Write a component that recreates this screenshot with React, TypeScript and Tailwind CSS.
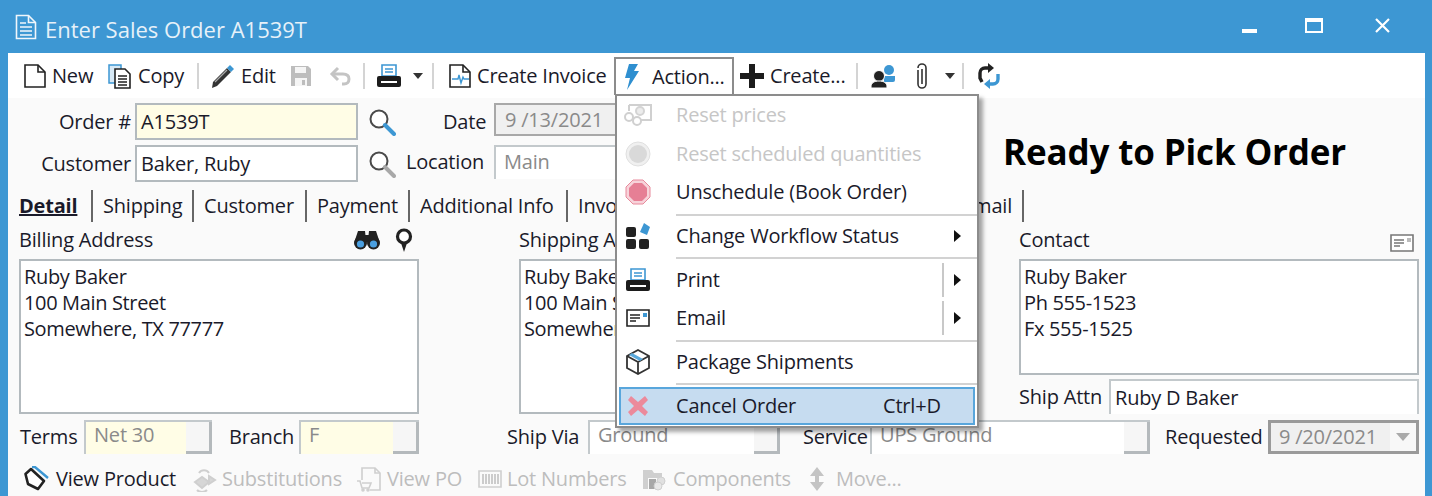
import React from 'react';

const Doc = () => (
  <svg width="24" height="26" viewBox="0 0 24 26" fill="none" stroke="#222" strokeWidth="1.6">
    <path d="M2 2h13l7 7v15H2z" fill="#fff" /><path d="M15 2v7h7" />
  </svg>
);
const CopyIco = () => (
  <svg width="26" height="26" viewBox="0 0 26 26" fill="none">
    <path d="M2 2h12v18H2z" fill="#d7e9f6" stroke="#3d97d3" strokeWidth="1.5" />
    <path d="M8 6h10l5 5v14H8z" fill="#fff" stroke="#222" strokeWidth="1.6" />
    <path d="M11 13h9M11 16h9M11 19h9M11 22h9" stroke="#222" strokeWidth="1.3" />
  </svg>
);
const Pencil = () => (
  <svg width="26" height="26" viewBox="0 0 26 26">
    <path d="M3 19 17 5l4 4L7 23l-5 2z" fill="#333" />
    <path d="M17 5l3-3 4 4-3 3z" fill="#3d97d3" />
    <path d="M5 19 17 7" stroke="#aaa" strokeWidth="1.2" />
  </svg>
);
const Save = () => (
  <svg width="22" height="22" viewBox="0 0 22 22">
    <path d="M1 1h17l3 3v17H1z" fill="#bdbdbd" />
    <path d="M5 2h11v6H5zM5 13h12v8H5z" fill="#f5f5f5" />
    <path d="M12 15h3v5h-3z" fill="#bdbdbd" />
  </svg>
);
const Undo = () => (
  <svg width="22" height="20" viewBox="0 0 22 20" fill="none" stroke="#c4c4c4" strokeWidth="3">
    <path d="M9 2 3 8l6 6" /><path d="M3 8h11c4 0 6 2 6 5s-2 5-5 5h-2" />
  </svg>
);
const Printer = ({ w = 26 }: { w?: number }) => (
  <svg width={w} height={w} viewBox="0 0 26 26">
    <path d="M6 2h14v11H6z" fill="#fff" stroke="#3d97d3" strokeWidth="1.6" />
    <path d="M9 6h8M9 9h8" stroke="#3d97d3" strokeWidth="1.4" />
    <path d="M3 13h20q2 0 2 2v7q0 2-2 2H3q-2 0-2-2v-7q0-2 2-2z" fill="#1c1c1c" />
    <path d="M5 18h16v2H5z" fill="#fff" />
  </svg>
);
const Caret = () => (
  <svg width="10" height="6" viewBox="0 0 10 6"><path d="M0 0h10L5 6z" fill="#333" /></svg>
);
const Invoice = () => (
  <svg width="24" height="26" viewBox="0 0 24 26" fill="none">
    <path d="M2 2h13l7 7v15H2z" fill="#fff" stroke="#222" strokeWidth="1.6" />
    <path d="M15 2v7h7" stroke="#222" strokeWidth="1.6" />
    <path d="M4 16h6l1-4 2 8 2-6 1 2h5" stroke="#3d97d3" strokeWidth="1.4" />
  </svg>
);
const Bolt = () => (
  <svg width="14" height="26" viewBox="0 0 14 26">
    <path d="M4 0h9L9 7h5L2 26l3-12H0z" fill="#2f8fd0" />
  </svg>
);
const Plus = () => (
  <svg width="24" height="24" viewBox="0 0 24 24"><path d="M9 0h6v9h9v6h-9v9H9v-9H0V9h9z" fill="#1c1c1c" /></svg>
);
const People = () => (
  <svg width="26" height="26" viewBox="0 0 26 26">
    <circle cx="19" cy="7" r="5" fill="#3d97d3" />
    <path d="M14 13h11v4a2 2 0 0 1-2 2h-9z" fill="#3d97d3" />
    <circle cx="9" cy="13" r="5.5" fill="#222" stroke="#fff" />
    <path d="M1 24c0-4 3-6 8-6s8 2 8 6v1H1z" fill="#222" stroke="#fff" />
  </svg>
);
const Clip = () => (
  <svg width="16" height="28" viewBox="0 0 16 28" fill="none" stroke="#333" strokeWidth="1.6">
    <path d="M4 8v14a4 4 0 0 0 8 0V6a4 4 0 0 0-8 0M8 7v15" />
  </svg>
);
const Refresh = () => (
  <svg width="24" height="26" viewBox="0 0 24 26" fill="none" strokeWidth="3.4">
    <path d="M12 5H8a5 5 0 0 0-5 5v5l2 4" stroke="#222" /><path d="M11 0v10l6-5z" fill="#222" />
    <path d="M12 21h4a5 5 0 0 0 5-5v-5" stroke="#3d97d3" /><path d="M13 16v10l-6-5z" fill="#3d97d3" />
  </svg>
);
const Search = ({ c }: { c: string }) => (
  <svg width="28" height="28" viewBox="0 0 28 28" fill="none">
    <circle cx="11" cy="11" r="8.5" stroke="#4a4a4a" strokeWidth="2" fill="#fff" />
    <path d="M17 17l9 9" stroke={c} strokeWidth="4" strokeLinecap="round" />
  </svg>
);
const Binoculars = () => (
  <svg width="26" height="20" viewBox="0 0 26 20">
    <circle cx="6.500" cy="13" r="6.500" fill="#222" /><circle cx="19.500" cy="13" r="6.500" fill="#222" />
    <path d="M4 1h7l1 9H1zM15 1h7l3 9H14zM10 5h6v7h-6z" fill="#222" />
    <circle cx="6.500" cy="14" r="3.600" fill="#4a9fe0" /><circle cx="19.500" cy="14" r="3.600" fill="#4a9fe0" />
  </svg>
);
const Pin = () => (
  <svg width="18" height="24" viewBox="0 0 18 24" fill="none">
    <circle cx="9" cy="8.500" r="6.500" stroke="#222" strokeWidth="3.200" fill="#fff" />
    <path d="M6 15h6l-3 9z" fill="#222" />
  </svg>
);
const CardIco = ({ dim = false }: { dim?: boolean }) => (
  <svg width="24" height="18" viewBox="0 0 24 18" fill="none">
    <path d="M1 1h22v16H1z" stroke={dim ? '#777' : '#222'} strokeWidth="1.600" fill="#fff" />
    <path d="M4 6h10M4 9h10M4 12h6" stroke={dim ? '#777' : '#222'} strokeWidth="1.300" />
    <path d="M17 4h4v4h-4z" fill={dim ? '#bbb' : '#3d97d3'} />
  </svg>
);
const Gears = () => (
  <svg width="30" height="24" viewBox="0 0 30 24" fill="none">
    <path d="M6 2h22v15H16" stroke="#d0d0d0" strokeWidth="2" />
    <path d="M6 2v6" stroke="#d0d0d0" strokeWidth="2" />
    <circle cx="17" cy="8" r="4" fill="#ececec" stroke="#d4d4d4" strokeWidth="2" />
    <circle cx="6" cy="14" r="4" fill="#fff" stroke="#d0d0d0" strokeWidth="2" />
    <circle cx="14" cy="18" r="4" fill="#fff" stroke="#d0d0d0" strokeWidth="2" />
  </svg>
);
const GrayDot = () => (
  <svg width="26" height="26" viewBox="0 0 26 26">
    <circle cx="13" cy="13" r="12" fill="#f0f0f0" stroke="#e0e0e0" />
    <circle cx="13" cy="13" r="9" fill="#d9d9d9" />
  </svg>
);
const Stop = () => (
  <svg width="26" height="26" viewBox="0 0 26 26">
    <path d="M8 1h10l7 7v10l-7 7H8l-7-7V8z" fill="#f7d3da" stroke="#e88a9c" />
    <path d="M9 4h8l5 5v8l-5 5H9l-5-5V9z" fill="#e67f95" />
  </svg>
);
const Squares = () => (
  <svg width="26" height="26" viewBox="0 0 26 26">
    <rect x="1" y="4" width="10" height="10" rx="2" fill="#222" />
    <rect x="1" y="16" width="10" height="10" rx="2" fill="#222" />
    <rect x="14" y="16" width="10" height="10" rx="2" fill="#222" />
    <path d="M19 0l6 4-3 8-7-3z" fill="#3d97d3" />
  </svg>
);
const Box = () => (
  <svg width="24" height="26" viewBox="0 0 24 26" fill="none">
    <path d="M12 1 23 7v12l-11 6-11-6V7z" fill="#fff" stroke="#333" strokeWidth="1.800" />
    <path d="M1 7l11 6 11-6M12 13v12" stroke="#333" strokeWidth="1.800" />
    <path d="M6 4l11 6-3 2L3 6z" fill="#5aa9dc" />
  </svg>
);
const XIco = () => (
  <svg width="22" height="22" viewBox="0 0 22 22">
    <path d="M4 1l7 6 7-6 3 4-6 6 6 6-3 4-7-6-7 6-3-4 6-6-6-6z" fill="#ec8a9b" />
  </svg>
);
const Tag = () => (
  <svg width="26" height="26" viewBox="0 0 26 26" fill="none">
    <path d="M8 1l3 0 13 11" stroke="#3d97d3" strokeWidth="2.400" />
    <path d="M1.500 8 7 3l13 12-6 8-10-5z" fill="#fff" stroke="#222" strokeWidth="2.600" strokeLinejoin="round" />
  </svg>
);
const SubsIco = () => (
  <svg width="26" height="26" viewBox="0 0 26 26" fill="none" stroke="#cfcfcf" strokeWidth="2">
    <path d="M8 7a6 6 0 0 1 10 0" /><path d="M4 16l7-5 7 5-7 6z" fill="#d6d6d6" />
    <path d="M18 10l6 4-6 4z" fill="#d6d6d6" /><path d="M6 24a7 7 0 0 0 10 0" />
  </svg>
);
const PoIco = () => (
  <svg width="26" height="26" viewBox="0 0 26 26" fill="none" stroke="#cfcfcf" strokeWidth="1.600">
    <path d="M6 14V2h13l5 5v17H14" /><path d="M19 2v5h5" />
    <path d="M1 15h3l2 7h7l2-5H6" /><circle cx="7" cy="24" r="1" /><circle cx="12" cy="24" r="1" />
  </svg>
);
const Barcode = () => (
  <svg width="24" height="18" viewBox="0 0 24 18" fill="none">
    <path d="M1 1h22v16H1z" stroke="#cfcfcf" strokeWidth="1.600" />
    <path d="M5 4v10M8 4v10M11 4v10M14 4v10M17 4v10M20 4v10" stroke="#c4c4c4" strokeWidth="1.700" />
  </svg>
);
const Comps = () => (
  <svg width="26" height="24" viewBox="0 0 26 24">
    <path d="M1 3h9l2 3h8v5H6v11H1z" fill="#cfcfcf" />
    <path d="M7 12h7v10H7z" fill="#a8a8a8" />
    <circle cx="19" cy="14" r="4" fill="#e0e0e0" stroke="#cfcfcf" />
    <circle cx="16" cy="19" r="4" fill="#e8e8e8" stroke="#cfcfcf" />
  </svg>
);
const MoveIco = () => (
  <svg width="18" height="24" viewBox="0 0 18 24"><path d="M9 0l7 9h-5v6h5l-7 9-7-9h5V9H2z" fill="#c4c4c4" /></svg>
);

const Sep = ({ className }: { className: string }) => <div className={`h-[26px] w-[2px] bg-[#d4d4d4] ${className}`} />;

const MenuSep = () => <div className="ml-[59px] h-[2px] bg-[#d2d2d2]" />;

const MenuItem = ({ icon, text, dim, h, arrow, split }: { icon: React.ReactNode; text: string; dim?: boolean; h: string; arrow?: boolean; split?: boolean }) => (
  <div className={`flex items-center ${h}`}>
    <div className="flex w-[59px] shrink-0 justify-center pr-[17px]">{icon}</div>
    <span className={`grow ${dim ? 'text-[#c6c6c6]' : ''}`}>{text}</span>
    {split && <div className="h-[34px] w-[2px] bg-[#c8c8c8]" />}
    {(arrow || split) && (
      <svg className={split ? 'ml-[10px] mr-[16px]' : 'mr-[16px]'} width="7" height="12" viewBox="0 0 7 12"><path d="M0 0l7 6-7 6z" fill="#111" /></svg>
    )}
  </div>
);

const ActionMenu = () => (
  <div className="absolute left-[-1px] top-[35px] z-20 flex h-[334px] w-[364px] flex-col border-2 border-[#8c8c8c] bg-white pt-[1px] shadow-[4px_4px_4px_rgba(0,0,0,0.35)]">
    <MenuItem icon={<Gears />} text="Reset prices" dim h="h-[37px]" />
    <MenuItem icon={<GrayDot />} text="Reset scheduled quantities" dim h="h-[40px]" />
    <MenuItem icon={<Stop />} text="Unschedule (Book Order)" h="h-[36px]" />
    <div className="mt-[4px]"><MenuSep /></div>
    <MenuItem icon={<Squares />} text="Change Workflow Status" arrow h="h-[41px]" />
    <MenuSep />
    <MenuItem icon={<Printer />} text="Print" split h="h-[42px]" />
    <MenuItem icon={<CardIco />} text="Email" split h="h-[39px] pb-[5px]" />
    <MenuSep />
    <MenuItem icon={<Box />} text="Package Shipments" h="h-[41px]" />
    <MenuSep />
    <div className="mx-[2px] mt-[2px] flex h-[38px] items-center border-2 border-[#58a6dc] bg-[#c6dcf0]">
      <div className="flex w-[55px] shrink-0 justify-center pr-[21px]"><XIco /></div>
      <span className="w-[207px]">Cancel Order</span>
      <span>Ctrl+D</span>
    </div>
  </div>
);

const Combo = ({ w, text, yellow }: { w: string; text: string; yellow?: boolean }) => (
  <div className={`flex h-[34px] ${w} border-l-2 border-t-2 border-[#c3c9cc] ${yellow ? 'bg-[#fffde6]' : 'bg-white'}`}>
    <span className="grow pl-[8px] leading-[26px] text-[#8a8a8a]">{text}</span>
    <div className="w-[26px] border-b-[3px] border-r-[3px] border-[#b4b9bc] bg-[#f6f6f6]" />
  </div>
);

const Address = ({ lines }: { lines: string[] }) => (
  <div className="h-[155px] border-2 border-[#b3babe] bg-white px-[3px] pt-[3px] leading-[26px] tracking-[-0.35px]">
    {lines.map((l) => <div key={l}>{l}</div>)}
  </div>
);

const Tab = ({ w, children }: { w: string; children: React.ReactNode }) => (
  <div className={`flex h-[32px] ${w} items-center border-r-2 border-[#666] pl-[10px] whitespace-nowrap`}>{children}</div>
);

const Gray = ({ w, icon, text }: { w: string; icon: React.ReactNode; text: string }) => (
  <div className={`flex ${w} items-center gap-[5px] text-[#bdbdbd]`}>{icon}<span>{text}</span></div>
);

export default function App() {
  return (
    <div className="h-[496px] w-[1432px] overflow-hidden bg-[#3d97d3] text-[20px] tracking-[-0.2px] text-[#1a1a2a] [font-family:'Open_Sans',sans-serif]">
      {/* title bar */}
      <div className="flex h-[53px] items-center pl-[15px] text-[#e6f1f9]">
        <svg width="22" height="26" viewBox="0 0 22 26" fill="none" stroke="#f0f6fb" strokeWidth="1.600">
          <path d="M1.500 1.500h12l7 7v16h-19z" /><path d="M13.500 1.500v7h7M5 9h6M5 13h12M5 17h12M5 21h12" />
        </svg>
        <span className="ml-[8px] w-[1197px] shrink-0 pt-[5px] text-[22px] tracking-normal">Enter Sales Order A1539T</span>
        <div className="h-[4px] w-[15px] shrink-0 translate-y-[4px] bg-white" />
        <div className="ml-[48px] h-[15px] w-[18px] shrink-0 -translate-y-[1px] border-2 border-t-4 border-white" />
        <svg className="ml-[52px] shrink-0 -translate-y-[1px]" width="15" height="15" viewBox="0 0 15 15" stroke="#fff" strokeWidth="2.200"><path d="M1 1l13 13M14 1 1 14" /></svg>
      </div>

      <div className="ml-[8px] mr-[7px] h-[443px] bg-[#fafafa]">
        {/* toolbar */}
        <div className="flex h-[45px] items-center bg-white pl-[15px]">
          <div className="flex w-[84px] items-center gap-[5px]"><Doc /><span>New</span></div>
          <div className="flex w-[90px] items-center gap-[5px]"><CopyIco /><span>Copy</span></div>
          <Sep className="mr-[11px]" />
          <div className="flex w-[80px] items-center gap-[5px]"><Pencil /><span>Edit</span></div>
          <div className="w-[39px]"><Save /></div>
          <div className="w-[34px]"><Undo /></div>
          <Sep className="mr-[11px]" />
          <div className="w-[37px]"><Printer /></div>
          <div className="w-[19px]"><Caret /></div>
          <Sep className="mr-[14px]" />
          <div className="flex w-[166px] items-center gap-[5px] whitespace-nowrap"><Invoice /><span>Create Invoice</span></div>
          <div className="relative flex h-[38px] w-[120px] items-center border-x-2 border-t-2 border-[#8c8c8c] bg-white pl-[9px]">
            <Bolt /><span className="ml-[13px]">Action...</span>
            <ActionMenu />
          </div>
          <div className="ml-[6px] flex w-[116px] items-center gap-[6px]"><Plus /><span>Create...</span></div>
          <Sep className="mr-[12px]" />
          <div className="w-[44px]"><People /></div>
          <div className="w-[31px]"><Clip /></div>
          <div className="w-[17px]"><Caret /></div>
          <Sep className="mr-[13px]" />
          <Refresh />
        </div>

        {/* order header */}
        <div className="flex pt-[5px]">
          <div className="flex w-[995px] flex-col gap-[5px]">
            <div className="flex h-[37px] items-center">
              <span className="w-[123px] text-right">Order #</span>
              <div className="ml-[4px] flex h-[37px] w-[223px] items-center border-2 border-[#b3babe] bg-[#fffde6] pl-[4px]">A1539T</div>
              <div className="ml-[10px] w-[75px]"><Search c="#3d97d3" /></div>
              <span className="w-[51px]">Date</span>
              <div className="flex h-[33px] w-[140px] items-center self-start border-2 border-[#a8a8a8] bg-[#f0f0f0] pl-[9px] text-[#8a8a8a]">9 /13/2021</div>
            </div>
            <div className="flex h-[37px] items-center">
              <span className="w-[123px] text-right">Customer</span>
              <div className="ml-[4px] flex h-[37px] w-[223px] items-center border-2 border-[#b3babe] bg-white pl-[4px]">Baker, Ruby</div>
              <div className="ml-[10px] w-[38px]"><Search c="#a8a8a8" /></div>
              <span className="w-[88px] pb-[3px]">Location</span>
              <div className="flex h-[34px] w-[140px] items-center self-start border-l-2 border-t-2 border-[#c3c9cc] bg-white pb-[3px] pl-[8px] text-[#8a8a8a]">Main</div>
            </div>
          </div>
          <h1 className="pt-[27px] text-[35px] leading-[44px] font-bold tracking-[-0.15px] whitespace-nowrap text-black">Ready to Pick Order</h1>
        </div>

        {/* tabs */}
        <div className="mt-[8px] flex pl-[1px]">
          <Tab w="w-[84px]"><span className="font-bold underline">Detail</span></Tab>
          <Tab w="w-[101px]">Shipping</Tab>
          <Tab w="w-[113px]">Customer</Tab>
          <Tab w="w-[103px]">Payment</Tab>
          <Tab w="w-[158px]">Additional Info</Tab>
          <Tab w="w-[456px]"><span className="grow">Invoices</span><span className="pr-[10px]">Email</span></Tab>
        </div>

        {/* addresses */}
        <div className="mt-[5px] grid grid-cols-[400px_400px_400px] gap-x-[100px] pl-[11px]">
          <div>
            <div className="flex h-[32px] items-center pb-[6px]">
              <span className="grow">Billing Address</span>
              <Binoculars /><div className="ml-[15px] mr-[6px]"><Pin /></div>
            </div>
            <Address lines={['Ruby Baker', '100 Main Street', 'Somewhere, TX 77777']} />
          </div>
          <div>
            <div className="flex h-[32px] items-center pb-[6px]">Shipping Address</div>
            <Address lines={['Ruby Baker', '100 Main Street', 'Somewhere, TX 77777']} />
          </div>
          <div>
            <div className="flex h-[32px] items-center pb-[6px]">
              <span className="grow">Contact</span>
              <div className="mr-[5px] translate-y-[3px]"><CardIco dim /></div>
            </div>
            <div className="h-[116px] border-2 border-[#b3babe] bg-white px-[3px] pt-[3px] leading-[26px] tracking-[-0.35px]">
              <div>Ruby Baker</div><div>Ph 555-1523</div><div>Fx 555-1525</div>
            </div>
            <div className="mt-[4px] flex items-center">
              <span className="w-[90px]">Ship Attn</span>
              <div className="flex h-[35px] grow items-center border-x-2 border-t-2 border-[#c3c9cc] bg-white pl-[4px]">Ruby D Baker</div>
            </div>
          </div>
        </div>

        {/* terms row */}
        <div className="mt-[6px] flex items-center pl-[12px]">
          <span className="w-[64px]">Terms</span>
          <Combo w="w-[128px]" text="Net 30" yellow />
          <span className="ml-[17px] w-[70px]">Branch</span>
          <Combo w="w-[120px]" text="F" yellow />
          <span className="ml-[88px] w-[81px]">Ship Via</span>
          <Combo w="w-[192px]" text="Ground" />
          <span className="ml-[23px] w-[67px]">Service</span>
          <Combo w="w-[280px]" text="UPS Ground" />
          <span className="ml-[15px] w-[103px]">Requested</span>
          <div className="flex h-[34px] w-[151px] border-[3px] border-[#9a9a9a] bg-[#f0f0f0]">
            <span className="grow pl-[8px] leading-[28px] text-[#8a8a8a]">9 /20/2021</span>
            <div className="flex w-[26px] items-center justify-center bg-[#f8f8f8]">
              <svg width="14" height="8" viewBox="0 0 14 8"><path d="M0 0h14L7 8z" fill="#aaa" /></svg>
            </div>
          </div>
        </div>

        {/* bottom toolbar */}
        <div className="mt-[10px] flex items-center pl-[16px]">
          <div className="flex w-[167px] items-center gap-[6px]"><Tag /><span>View Product</span></div>
          <Gray w="w-[165px]" icon={<SubsIco />} text="Substitutions" />
          <Gray w="w-[122px]" icon={<PoIco />} text="View PO" />
          <Gray w="w-[164px]" icon={<Barcode />} text="Lot Numbers" />
          <Gray w="w-[166px]" icon={<Comps />} text="Components" />
          <div className="flex items-center gap-[10px] text-[#bdbdbd]"><MoveIco /><span>Move...</span></div>
        </div>
      </div>
    </div>
  );
}
